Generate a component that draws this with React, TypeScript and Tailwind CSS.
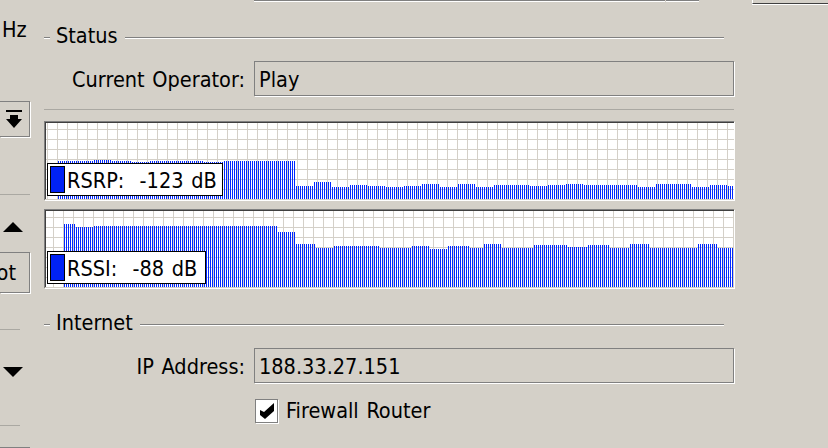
const bg1: [number, number, number][] = [
  [58, 94, 161], [94, 112, 160], [112, 132, 161], [132, 150, 162], [150, 204, 161], [204, 224, 162], [224, 296, 161],
  [296, 314, 186], [314, 332, 182], [332, 350, 187], [350, 368, 185], [368, 386, 186], [386, 404, 187], [404, 422, 186],
  [422, 440, 184], [440, 458, 187], [458, 476, 184], [476, 494, 187], [494, 530, 185], [530, 548, 186], [548, 566, 185],
  [566, 584, 184], [584, 638, 185], [638, 656, 187], [656, 692, 184], [692, 710, 187], [710, 728, 185], [728, 734, 186],
];
const bg2: [number, number, number][] = [
  [64, 76, 224], [76, 94, 227], [94, 278, 226], [278, 296, 232], [296, 316, 244], [316, 334, 248], [334, 380, 246],
  [380, 412, 248], [412, 430, 246], [430, 448, 249], [448, 470, 246], [470, 484, 248], [484, 502, 244], [502, 534, 248],
  [534, 568, 245], [568, 588, 247], [588, 610, 245], [610, 630, 248], [630, 650, 244], [650, 698, 248], [698, 718, 244],
  [718, 734, 248],
];

function range(from: number, to: number, step: number) {
  const r: number[] = [];
  for (let i = from; i < to; i += step) r.push(i);
  return r;
}

function Chart({ top, height, gx, gy, segs, label, legendW, legendTop }: {
  top: number; height: number; gx: number; gy: number; segs: [number, number, number][]; label: string; legendW: string; legendTop: string;
}) {
  const bottom = top + height;
  let d = "";
  for (const [a, b, t] of segs) {
    for (let x = a; x < b; x += 2) d += `M${x} ${t}h1V${bottom}h-1z`;
  }
  return (
    <div className="relative w-[690px] h-[79px] border-l border-t border-[#808080] shadow-[1px_1px_0_#ffffff]">
      <div className="h-[77px] border-l border-t border-[#404040] bg-white">
        <svg width={688} height={height} viewBox={`46 ${top} 688 ${height}`} shapeRendering="crispEdges" className="block">
          {range(gx, 734, 10).map((x) => <rect key={x} x={x} y={top} width={1} height={height} fill="#d4d0c8" />)}
          {range(gy, bottom, 10).map((y) => <rect key={y} x={46} y={y} width={688} height={1} fill="#d4d0c8" />)}
          <path d={d} fill="#0028ff" />
        </svg>
      </div>
      <div className={`absolute left-[2px] ${legendTop} ${legendW} h-[33px] bg-white border border-black flex items-center pl-[2px]`}>
        <div className="w-[15px] h-[27px] bg-[#0022f5] border border-black mr-[2px]" />
        <span className="whitespace-pre pt-[2px]">{label}</span>
      </div>
    </div>
  );
}

function Legend({ title }: { title: string }) {
  return (
    <div className="flex items-center h-[26px] w-[680px]">
      <div className="w-[6px] h-[2px] border-t border-b border-t-[#808080] border-b-white" />
      <span className="pl-[6px] pr-[7px] pb-[4px]">{title}</span>
      <div className="grow h-[2px] border-t border-b border-t-[#808080] border-b-white" />
    </div>
  );
}

function Field({ label, value }: { label: string; value: string }) {
  return (
    <div className="flex items-center">
      <div className="w-[201px] text-right pt-[2px]">{label}</div>
      <div className="ml-[9px] w-[480px] h-[35px] border border-[#808080] shadow-[1px_1px_0_#ffffff] flex items-center pl-[4px] pt-[2px]">{value}</div>
    </div>
  );
}

function Etch({ w }: { w: string }) {
  return <div className={`${w} h-px bg-[#aaa8a2]`} />;
}

export default function App() {
  return (
    <div className="w-[828px] h-[448px] overflow-hidden bg-[#d4d0c8] flex text-[21.5px] leading-[24px] [word-spacing:1.5px] text-black" style={{ fontFamily: '"DejaVu Sans Condensed", "DejaVu Sans", sans-serif' }}>
      <div className="w-[44px] h-[470px] shrink-0 flex flex-col">
        <div className="h-[24px] mt-[18px] pl-[2px]">Hz</div>
        <div className="mt-[59px] w-[30px] h-[36px] border border-l-0 border-[#808080] shadow-[1px_1px_0_#ffffff] flex items-center justify-center">
          <svg width="16" height="18" viewBox="0 0 16 18" className="block ml-[-2px]"><path d="M0 0h16v2H0zM4 5h8v4h4l-8 9-8-9h4z" fill="#000" /></svg>
        </div>
        <div className="mt-[57px]"><Etch w="w-[30px]" /></div>
        <svg width="20" height="10" viewBox="0 0 20 10" className="block mt-[27px] ml-[3px]"><path d="M10 0l10 10H0z" fill="#000" /></svg>
        <div className="mt-[20px] w-[30px] h-[41px] border border-l-0 border-[#808080] shadow-[1px_1px_0_#ffffff] flex items-center justify-end pr-[13px] whitespace-nowrap">ot</div>
        <div className="mt-[36px]"><Etch w="w-[20px]" /></div>
        <svg width="20" height="10" viewBox="0 0 20 10" className="block mt-[37px] ml-[3px]"><path d="M0 0h20L10 10z" fill="#000" /></svg>
        <div className="mt-[48px]"><Etch w="w-[20px]" /></div>
        <div className="mt-[21px] w-[30px] h-[20px] border border-l-0 border-[#808080] shadow-[1px_1px_0_#ffffff]" />
      </div>

      <div className="w-[690px] shrink-0 flex flex-col">
        <div className="flex h-[2px] ml-[210px]">
          <div className="w-[411px] border-t border-b border-t-[#808080] border-b-white" />
          <div className="w-[33px] ml-px border-t border-b border-t-[#808080] border-b-white" />
        </div>
        <div className="mt-[23px]"><Legend title="Status" /></div>
        <div className="mt-[10px]"><Field label="Current Operator:" value="Play" /></div>
        <div className="mt-[13px] h-px bg-[#aaa8a2]" />
        <div className="mt-[11px]"><Chart top={123} height={76} gx={47} gy={129} segs={bg1} label="RSRP:  -123 dB" legendW="w-[176px]" legendTop="top-[41px]" /></div>
        <div className="mt-[9px]"><Chart top={211} height={76} gx={53} gy={217} segs={bg2} label="RSSI:  -88 dB" legendW="w-[159px]" legendTop="top-[41px]" /></div>
        <div className="mt-[24px]"><Legend title="Internet" /></div>
        <div className="mt-[10px]"><Field label="IP Address:" value="188.33.27.151" /></div>
        <div className="mt-[16px] ml-[211px] flex items-center">
          <div className="w-[23px] h-[24px] bg-white border border-[#808080] shadow-[1px_1px_0_#ffffff] flex items-center justify-center">
            <svg width="14" height="16" viewBox="0 0 14 16" className="block"><path d="M0 7l4 2 10-9v8l-9 8-5-4z" fill="#000" /></svg>
          </div>
          <span className="ml-[8px]">Firewall Router</span>
        </div>
      </div>

      <div className="ml-[18px] w-[76px] shrink-0 h-[4px] border-b border-l border-l-white border-b-[#404040] shadow-[0_1px_0_#ffffff]" />
    </div>
  );
}
